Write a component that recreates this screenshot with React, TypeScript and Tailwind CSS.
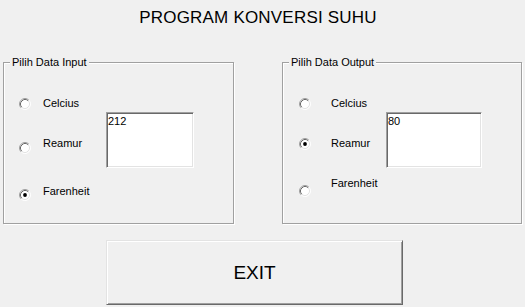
import { useState } from 'react'

type Unit = 'celcius' | 'reamur' | 'farenheit'

function Radio({ checked, onClick, className }: { checked: boolean; onClick: () => void; className?: string }) {
  return (
    <button type="button" onClick={onClick} className={`block h-[12px] w-[12px] shrink-0 ${className ?? ''}`}>
      <svg width="12" height="12" viewBox="0 0 12 12">
        <circle cx="6" cy="6" r="5" fill="#ffffff" />
        <path d="M2.11 9.89 A5.5 5.5 0 0 1 9.89 2.11" fill="none" stroke="#a0a0a0" strokeWidth="1" />
        <path d="M9.89 2.11 A5.5 5.5 0 0 1 2.11 9.89" fill="none" stroke="#ffffff" strokeWidth="1" />
        <path d="M2.82 9.18 A4.5 4.5 0 0 1 9.18 2.82" fill="none" stroke="#696969" strokeWidth="1" />
        <path d="M9.18 2.82 A4.5 4.5 0 0 1 2.82 9.18" fill="none" stroke="#e3e3e3" strokeWidth="1" />
        {checked && <circle cx="6" cy="6" r="1.9" fill="#000000" />}
      </svg>
    </button>
  )
}

function TextBox({ value, width }: { value: string; width: string }) {
  return (
    <div
      className={`${width} mt-[49px] h-[56px] border border-t-[#a0a0a0] border-l-[#a0a0a0] border-r-white border-b-white bg-white pl-[1px] pt-[2px] text-[11px] leading-[13px] shadow-[inset_1px_1px_0_#696969,inset_-1px_-1px_0_#e3e3e3]`}
    >
      {value}
    </div>
  )
}

export default function App() {
  const [input, setInput] = useState<Unit>('farenheit')
  const [output, setOutput] = useState<Unit>('reamur')

  return (
    <div className="h-[307px] w-[525px] overflow-hidden bg-[#f0f0f0] text-black [font-family:'Liberation_Sans',Arial,sans-serif]">
      {/* Title */}
      <div className="pr-[9px] pt-[8px] text-center text-[17px] leading-[20px] tracking-[0.2px]">
        PROGRAM KONVERSI SUHU
      </div>

      {/* Group boxes */}
      <div className="mt-[34px] flex gap-[48px] pl-[3px]">
        {/* Input */}
        <div className="relative h-[162px] w-[231px] border border-[#a0a0a0] shadow-[inset_1px_1px_0_#fff,1px_1px_0_#fff]">
          <span className="absolute -top-[7px] left-[6px] bg-[#f0f0f0] px-[2px] text-[11px] leading-[13px]">
            Pilih Data Input
          </span>
          <div className="flex">
            <div className="flex w-[102px] flex-col pt-[34px] text-[11px] leading-[13px]">
              <div className="flex items-start">
                <Radio className="ml-[15px] mt-[1px]" checked={input === 'celcius'} onClick={() => setInput('celcius')} />
                <span className="ml-[12px]">Celcius</span>
              </div>
              <div className="mt-[27px] flex items-start">
                <Radio className="ml-[15px] mt-[5px]" checked={input === 'reamur'} onClick={() => setInput('reamur')} />
                <span className="ml-[12px]">Reamur</span>
              </div>
              <div className="mt-[31px] flex items-start">
                <Radio className="ml-[15px] mt-[4px]" checked={input === 'farenheit'} onClick={() => setInput('farenheit')} />
                <span className="ml-[12px]">Farenheit</span>
              </div>
            </div>
            <TextBox value="212" width="w-[88px]" />
          </div>
        </div>

        {/* Output */}
        <div className="relative h-[162px] w-[240px] border border-[#a0a0a0] shadow-[inset_1px_1px_0_#fff,1px_1px_0_#fff]">
          <span className="absolute -top-[7px] left-[6px] bg-[#f0f0f0] px-[2px] text-[11px] leading-[13px]">
            Pilih Data Output
          </span>
          <div className="flex">
            <div className="flex w-[103px] flex-col pt-[34px] text-[11px] leading-[13px]">
              <div className="flex items-start">
                <Radio className="ml-[16px] mt-[1px]" checked={output === 'celcius'} onClick={() => setOutput('celcius')} />
                <span className="ml-[20px]">Celcius</span>
              </div>
              <div className="mt-[27px] flex items-start">
                <Radio className="ml-[16px] mt-[1px]" checked={output === 'reamur'} onClick={() => setOutput('reamur')} />
                <span className="ml-[20px]">Reamur</span>
              </div>
              <div className="mt-[27px] flex items-start">
                <Radio className="ml-[16px] mt-[8px]" checked={output === 'farenheit'} onClick={() => setOutput('farenheit')} />
                <span className="ml-[20px]">Farenheit</span>
              </div>
            </div>
            <TextBox value="80" width="w-[96px]" />
          </div>
        </div>
      </div>

      {/* Exit button */}
      <button
        type="button"
        className="ml-[106px] mt-[16px] flex h-[65px] w-[297px] items-center justify-center border border-t-[#e3e3e3] border-l-[#e3e3e3] border-r-[#696969] border-b-[#696969] bg-[#f0f0f0] text-[19px] leading-[22px] shadow-[inset_1px_1px_0_#fff,inset_-1px_-1px_0_#a0a0a0]"
      >
        EXIT
      </button>
    </div>
  )
}
